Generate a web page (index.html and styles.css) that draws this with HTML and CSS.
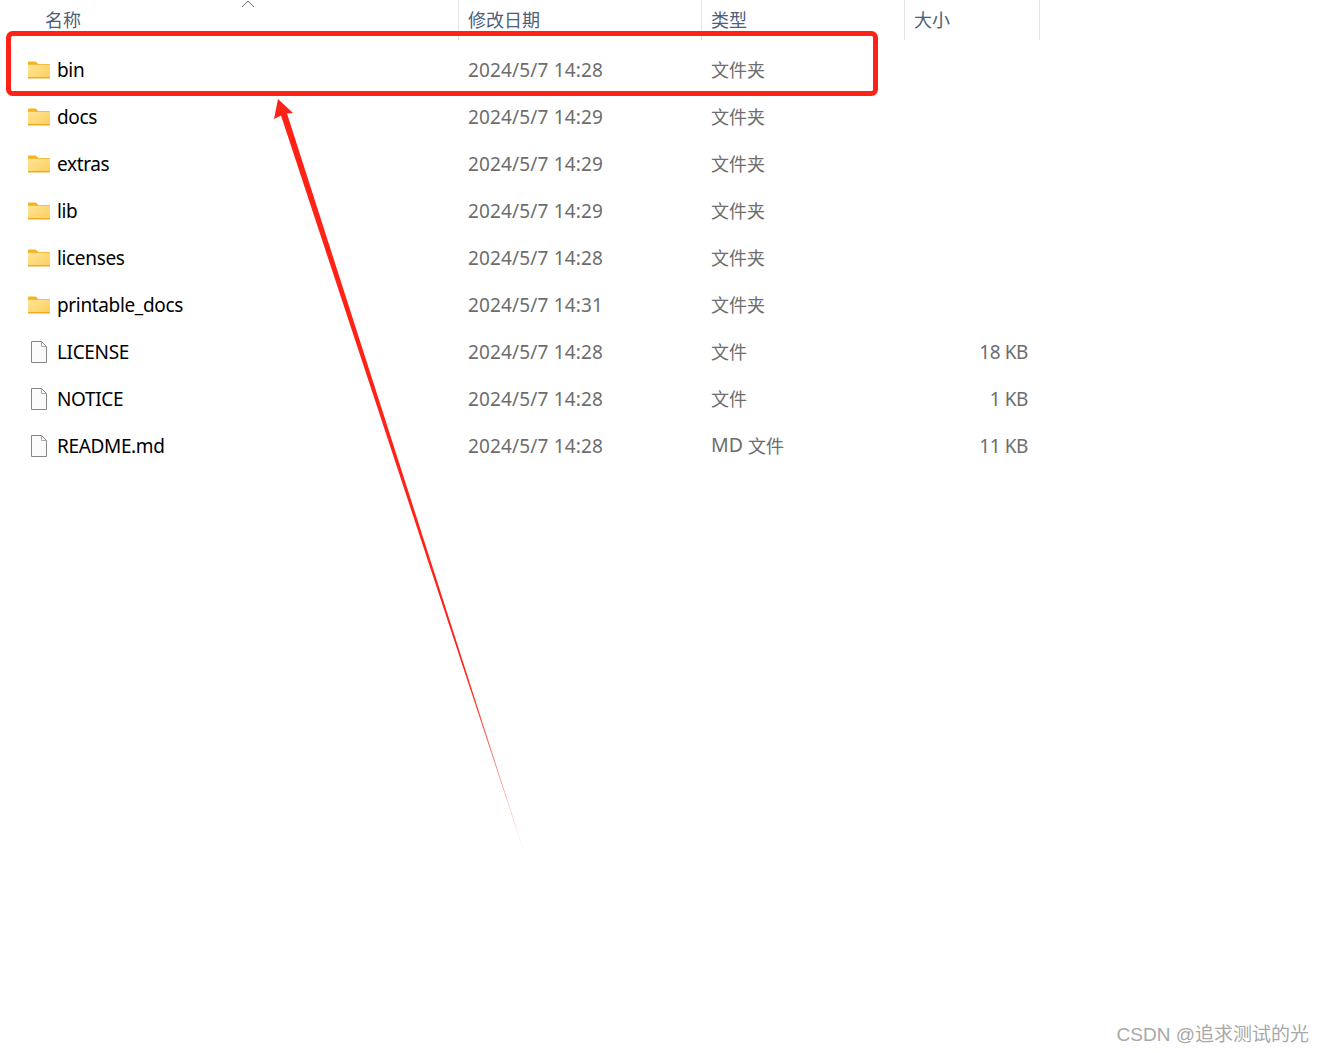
FILE: index.html
```html
<!DOCTYPE html>
<html lang="zh-CN">
<head>
<meta charset="utf-8">
<title>文件列表</title>
<link rel="stylesheet" href="styles.css">
</head>
<body>
<main class="explorer">
  <header class="row head">
    <div class="cell name-head">名称<svg class="sort" width="14" height="8" viewBox="0 0 14 8"><path d="M1 7 7 1l6 6" fill="none" stroke="#707070" stroke-width="1"/></svg></div>
    <div class="cell sep">修改日期</div>
    <div class="cell sep">类型</div>
    <div class="cell sep last">大小</div>
  </header>
  <section class="files">
    <div class="row item"><div class="cell name"><svg class="ico"><use href="#folder"/></svg>bin</div><div class="cell meta date">2024/5/7 14:28</div><div class="cell meta type">文件夹</div><div class="cell meta size"></div></div>
    <div class="row item"><div class="cell name"><svg class="ico"><use href="#folder"/></svg>docs</div><div class="cell meta date">2024/5/7 14:29</div><div class="cell meta type">文件夹</div><div class="cell meta size"></div></div>
    <div class="row item"><div class="cell name"><svg class="ico"><use href="#folder"/></svg>extras</div><div class="cell meta date">2024/5/7 14:29</div><div class="cell meta type">文件夹</div><div class="cell meta size"></div></div>
    <div class="row item"><div class="cell name"><svg class="ico"><use href="#folder"/></svg>lib</div><div class="cell meta date">2024/5/7 14:29</div><div class="cell meta type">文件夹</div><div class="cell meta size"></div></div>
    <div class="row item"><div class="cell name"><svg class="ico"><use href="#folder"/></svg>licenses</div><div class="cell meta date">2024/5/7 14:28</div><div class="cell meta type">文件夹</div><div class="cell meta size"></div></div>
    <div class="row item"><div class="cell name"><svg class="ico"><use href="#folder"/></svg>printable_docs</div><div class="cell meta date">2024/5/7 14:31</div><div class="cell meta type">文件夹</div><div class="cell meta size"></div></div>
    <div class="row item"><div class="cell name"><svg class="ico"><use href="#file"/></svg>LICENSE</div><div class="cell meta date">2024/5/7 14:28</div><div class="cell meta type">文件</div><div class="cell meta size">18 KB</div></div>
    <div class="row item"><div class="cell name"><svg class="ico"><use href="#file"/></svg>NOTICE</div><div class="cell meta date">2024/5/7 14:28</div><div class="cell meta type">文件</div><div class="cell meta size">1 KB</div></div>
    <div class="row item"><div class="cell name"><svg class="ico"><use href="#file"/></svg>README.md</div><div class="cell meta date">2024/5/7 14:28</div><div class="cell meta type"><span class="ext">MD</span>文件</div><div class="cell meta size">11 KB</div></div>
  </section>
</main>

<svg class="defs" width="0" height="0">
  <defs>
    <linearGradient id="fg" x1="0" y1="0" x2="1" y2="1">
      <stop offset="0" stop-color="#ffe596"/>
      <stop offset="1" stop-color="#fdcf5f"/>
    </linearGradient>
    <symbol id="folder" viewBox="0 0 24 20">
      <path d="M1 2.500A1 1 0 0 1 2 1.500h6.500L11 3.500v3H1z" fill="#f5b41e"/>
      <rect x="1" y="4" width="22" height="14" fill="url(#fg)"/>
      <rect x="1" y="4" width="22" height="1" fill="#f4bd3f"/>
      <rect x="1" y="17" width="22" height="1.500" fill="#efab22"/>
    </symbol>
    <symbol id="file" viewBox="0 0 24 24">
      <path d="M4.500 1.500h10l5 5v16h-15z" fill="#fbfbfb" stroke="#858585" stroke-width="1"/>
      <path d="M14.500 1.500v5h5" fill="none" stroke="#a8a8a8" stroke-width="1"/>
    </symbol>
  </defs>
</svg>

<svg class="annotation" width="1324" height="1053" viewBox="0 0 1324 1053">
  <defs>
    <linearGradient id="ag" gradientUnits="userSpaceOnUse" x1="290" y1="140" x2="525" y2="855">
      <stop offset="0" stop-color="#ff2317"/>
      <stop offset="0.75" stop-color="#ff2317"/>
      <stop offset="1" stop-color="#ff2317" stop-opacity="0.35"/>
    </linearGradient>
  </defs>
  <rect x="8.500" y="33.500" width="867" height="60" rx="4" fill="none" stroke="#ff2317" stroke-width="5"/>
  <path d="M278 99 293 113 287 113.500 525 855 281 115.500 274 119z" fill="url(#ag)"/>
</svg>

<footer class="mark">CSDN @追求测试的光</footer>
</body>
</html>
```
FILE: styles.css
```css
* { box-sizing: border-box; }

html, body {
  margin: 0;
  background: #fff;
}

body {
  position: relative;
  width: 1324px;
  height: 1053px;
  overflow: hidden;
  font-family: "Noto Sans", "Noto Sans CJK SC", sans-serif;
  font-size: 19px;
}

.row {
  display: grid;
  grid-template-columns: 458px 243px 203px 136px;
  width: 1041px;
}

.cell {
  display: flex;
  align-items: center;
  white-space: nowrap;
}

.head {
  height: 40px;
  color: #4c607a;
  font-size: 18px;
}

.head .cell {
  padding-bottom: 2px;
}

.name-head {
  padding-left: 45px;
  position: relative;
}

.sort {
  position: absolute;
  left: 241px;
  top: 0;
}

.sep {
  padding-left: 9px;
  border-left: 1px solid #e5e5e5;
}

.last {
  border-right: 1px solid #e5e5e5;
}

.files {
  padding-top: 6px;
}

.item {
  height: 47px;
}

.name {
  color: #000;
  padding-left: 27px;
  letter-spacing: -0.35px;
}

.ico {
  width: 24px;
  height: 24px;
  margin-right: 6px;
  flex: none;
}

.meta {
  color: #6d6d6d;
  padding-left: 10px;
}

.date {
  letter-spacing: 0.15px;
}

.type {
  font-size: 18px;
  padding-bottom: 2px;
}

.ext {
  font-size: 19.500px;
  margin-right: 5px;
}

.size {
  justify-content: flex-end;
  padding-right: 12px;
  letter-spacing: -0.4px;
}

.defs {
  position: absolute;
}

.annotation {
  position: absolute;
  left: 0;
  top: 0;
  pointer-events: none;
}

.mark {
  position: absolute;
  right: 15px;
  bottom: 7px;
  color: #a8a8a8;
  font-family: "Liberation Sans", "Noto Sans CJK SC", sans-serif;
  font-size: 19px;
}
```
